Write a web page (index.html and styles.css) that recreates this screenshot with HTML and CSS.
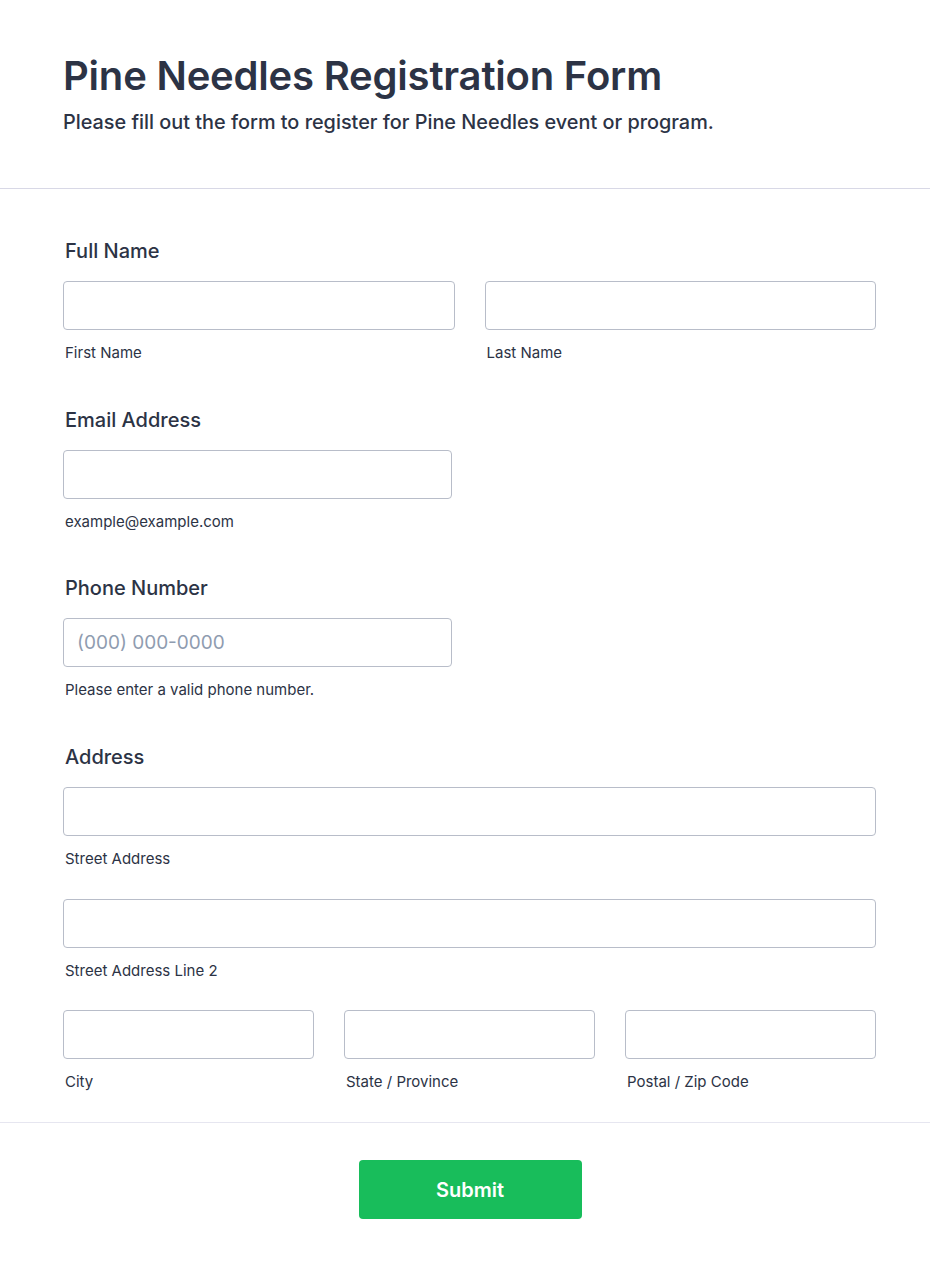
FILE: index.html
```html
<!DOCTYPE html>
<html lang="en">
<head>
<meta charset="utf-8">
<title>Pine Needles Registration Form</title>
<link rel="stylesheet" href="styles.css">
</head>
<body>
<form class="form">
  <header class="form-header">
    <h1 class="form-title">Pine Needles Registration Form</h1>
    <p class="form-subtitle">Please fill out the form to register for Pine Needles event or program.</p>
  </header>

  <section class="form-body">
    <div class="question">
      <label class="question-label">Full Name</label>
      <div class="grid grid-2">
        <div class="sub-field">
          <input class="text-input" type="text">
          <span class="sub-label">First Name</span>
        </div>
        <div class="sub-field">
          <input class="text-input" type="text">
          <span class="sub-label">Last Name</span>
        </div>
      </div>
    </div>

    <div class="question">
      <label class="question-label">Email Address</label>
      <div class="sub-field narrow">
        <input class="text-input" type="email">
        <span class="sub-label">example@example.com</span>
      </div>
    </div>

    <div class="question">
      <label class="question-label">Phone Number</label>
      <div class="sub-field narrow">
        <input class="text-input" type="tel" placeholder="(000) 000-0000">
        <span class="sub-label">Please enter a valid phone number.</span>
      </div>
    </div>

    <div class="question">
      <label class="question-label">Address</label>
      <div class="address">
        <div class="sub-field">
          <input class="text-input" type="text">
          <span class="sub-label">Street Address</span>
        </div>
        <div class="sub-field">
          <input class="text-input" type="text">
          <span class="sub-label">Street Address Line 2</span>
        </div>
        <div class="grid grid-3">
          <div class="sub-field">
            <input class="text-input" type="text">
            <span class="sub-label">City</span>
          </div>
          <div class="sub-field">
            <input class="text-input" type="text">
            <span class="sub-label">State / Province</span>
          </div>
          <div class="sub-field">
            <input class="text-input" type="text">
            <span class="sub-label">Postal / Zip Code</span>
          </div>
        </div>
      </div>
    </div>
  </section>

  <footer class="form-footer">
    <button class="submit-button" type="submit">Submit</button>
  </footer>
</form>
</body>
</html>
```

FILE: styles.css
```css
* {
  box-sizing: border-box;
}

body {
  margin: 0;
  background: #ffffff;
  color: #2c3345;
  font-family: Inter, "Noto Sans", "Liberation Sans", sans-serif;
}

.form {
  width: 930px;
}

.form-header {
  padding: 52px 54px 54px 63px;
  border-bottom: 1px solid #d8d8e6;
}

.form-title {
  margin: 0;
  font-size: 40px;
  line-height: 48px;
  font-weight: 600;
  letter-spacing: -0.2px;
  color: #2c3345;
}

.form-subtitle {
  margin: 10px 0 0;
  font-size: 19.85px;
  line-height: 24px;
  font-weight: 500;
  color: #2c3345;
}

.form-body {
  padding: 51px 54px 31px 63px;
  display: flex;
  flex-direction: column;
  gap: 46.7px;
  border-bottom: 1px solid #e6e6f0;
}

.question {
  display: flex;
  flex-direction: column;
}

.question-label {
  display: block;
  padding-left: 2px;
  margin-bottom: 19px;
  font-size: 20px;
  line-height: 22px;
  font-weight: 500;
  color: #2c3345;
}

.grid {
  display: grid;
  column-gap: 30px;
}

.grid-2 {
  grid-template-columns: 1fr 1fr;
}

.grid-3 {
  grid-template-columns: 1fr 1fr 1fr;
}

.address {
  display: flex;
  flex-direction: column;
  gap: 30.5px;
}

.sub-field {
  display: flex;
  flex-direction: column;
  min-width: 0;
}

.sub-field.narrow {
  width: 389px;
}

.text-input {
  display: block;
  width: 100%;
  height: 49px;
  margin: 0;
  padding: 0 13px;
  border: 1px solid #b8bdc9;
  border-radius: 4px;
  background: #ffffff;
  font-family: inherit;
  font-size: 19px;
  color: #2c3345;
}

.text-input::placeholder {
  color: #8f9cb0;
}

.sub-label {
  display: block;
  margin-top: 14px;
  padding-left: 2px;
  font-size: 15px;
  line-height: 18px;
  font-weight: 400;
  color: #2c3345;
}

.form-footer {
  display: flex;
  justify-content: center;
  padding: 37px 53px 50px 63px;
}

.submit-button {
  width: 223px;
  height: 59px;
  border: none;
  border-radius: 4px;
  background: #18bd5b;
  color: #ffffff;
  font-family: inherit;
  font-size: 20px;
  font-weight: 600;
  cursor: pointer;
}
```
